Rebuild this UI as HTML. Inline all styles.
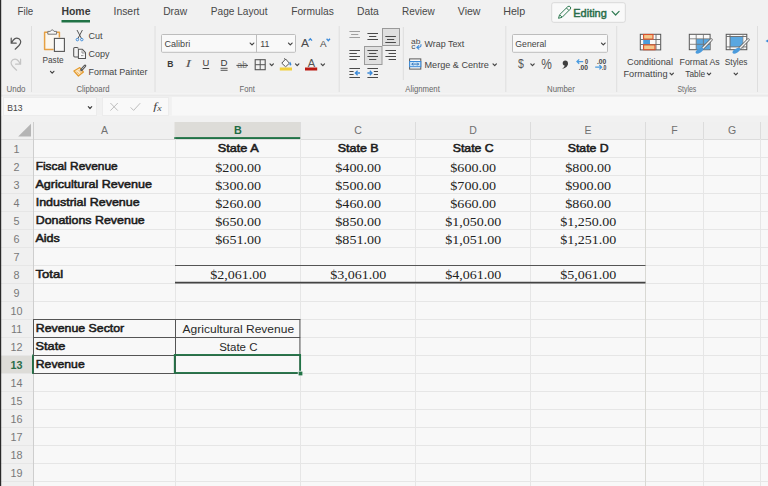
<!DOCTYPE html>
<html lang="en">
<head>
<meta charset="utf-8">
<title>Book - Excel</title>
<style>
html,body{margin:0;padding:0;background:#f8f8f8;overflow:hidden;}
body{width:768px;height:486px;font-family:'Liberation Sans',sans-serif;}
svg{display:block;position:absolute;left:0;top:0;}
text{white-space:pre;}
</style>
</head>
<body>
<svg width="768" height="486" viewBox="0 0 768 486">
<g id="ribbon">
<rect x="0" y="0" width="768" height="97" fill="#f1f1f1"/>
<rect x="0" y="92.8" width="768" height="1.8" fill="#f4f4f4"/>
<rect x="0" y="94.6" width="768" height="2" fill="#eaeaea"/>
<rect x="0" y="96.4" width="768" height="0.8" fill="#f1f1f1"/>
<text x="17.60" y="14.75" font-family="'Liberation Sans', sans-serif" font-size="10.5" font-weight="400" fill="#484848" textLength="15.65" lengthAdjust="spacingAndGlyphs">File</text>
<text x="61.40" y="14.75" font-family="'Liberation Sans', sans-serif" font-size="10.5" font-weight="700" fill="#3a3a3a" textLength="29.10" lengthAdjust="spacingAndGlyphs">Home</text>
<text x="113.50" y="14.75" font-family="'Liberation Sans', sans-serif" font-size="10.5" font-weight="400" fill="#484848" textLength="26.00" lengthAdjust="spacingAndGlyphs">Insert</text>
<text x="163.20" y="14.75" font-family="'Liberation Sans', sans-serif" font-size="10.5" font-weight="400" fill="#484848" textLength="24.00" lengthAdjust="spacingAndGlyphs">Draw</text>
<text x="210.80" y="14.75" font-family="'Liberation Sans', sans-serif" font-size="10.5" font-weight="400" fill="#484848" textLength="56.70" lengthAdjust="spacingAndGlyphs">Page Layout</text>
<text x="291.20" y="14.75" font-family="'Liberation Sans', sans-serif" font-size="10.5" font-weight="400" fill="#484848" textLength="42.60" lengthAdjust="spacingAndGlyphs">Formulas</text>
<text x="357.00" y="14.75" font-family="'Liberation Sans', sans-serif" font-size="10.5" font-weight="400" fill="#484848" textLength="21.80" lengthAdjust="spacingAndGlyphs">Data</text>
<text x="402.00" y="14.75" font-family="'Liberation Sans', sans-serif" font-size="10.5" font-weight="400" fill="#484848" textLength="32.70" lengthAdjust="spacingAndGlyphs">Review</text>
<text x="457.80" y="14.75" font-family="'Liberation Sans', sans-serif" font-size="10.5" font-weight="400" fill="#484848" textLength="22.70" lengthAdjust="spacingAndGlyphs">View</text>
<text x="503.20" y="14.75" font-family="'Liberation Sans', sans-serif" font-size="10.5" font-weight="400" fill="#484848" textLength="22.00" lengthAdjust="spacingAndGlyphs">Help</text>
<rect x="61.5" y="20" width="28.5" height="2.5" fill="#217346"/>
<rect x="551.7" y="2.7" width="73.6" height="19.6" fill="#f9f9f9" stroke="#d9d9d9" stroke-width="1" rx="2"/>
<path d="M558.5,18.3 L559.6,14.7 L567.8,6.6 Q569.2,5.6 570.3,6.9 Q571.3,8.0 570.2,9.2 L562.1,17.3 Z M559.8,14.9 L561.9,17.0 M566.5,8.0 L568.8,10.4" stroke="#2f7a52" fill="none" stroke-width="1.0" stroke-linejoin="round"/>
<text x="573.30" y="16.70" font-family="'Liberation Sans', sans-serif" font-size="10.5" font-weight="400" fill="#2a6e4a" textLength="33.50" lengthAdjust="spacingAndGlyphs" stroke="#2a6e4a" stroke-width="0.45">Editing</text>
<path d="M612.1,11.399999999999999 L615.6,15.0 L619.1,11.399999999999999" stroke="#2f7a52" fill="none" stroke-width="1.2" stroke-linecap="round" stroke-linejoin="round"/>
<line x1="31.5" y1="26" x2="31.5" y2="92" stroke="#dedede" stroke-width="1"/>
<line x1="155" y1="26" x2="155" y2="92" stroke="#dedede" stroke-width="1"/>
<line x1="339.2" y1="26" x2="339.2" y2="92" stroke="#dedede" stroke-width="1"/>
<line x1="505.8" y1="26" x2="505.8" y2="92" stroke="#dedede" stroke-width="1"/>
<line x1="616.7" y1="26" x2="616.7" y2="92" stroke="#dedede" stroke-width="1"/>
<line x1="757.5" y1="26" x2="757.5" y2="92" stroke="#dedede" stroke-width="1"/>
<line x1="403.3" y1="27" x2="403.3" y2="80" stroke="#dedede" stroke-width="1"/>
<path d="M11.2,38.2 L11.2,43.2 L16.2,43.2 M11.6,42.8 Q14.5,36.5 19.0,38.8 Q22.5,41.5 19.0,45.5 L15.2,49.2" stroke="#555" fill="none" stroke-width="1.2" stroke-linecap="round" stroke-linejoin="round"/>
<path d="M20.6,59.2 L20.6,64.2 L15.6,64.2 M20.2,63.8 Q17.3,57.5 12.8,59.8 Q9.3,62.5 12.8,66.5 L16.6,70.2" stroke="#c4c4c4" fill="none" stroke-width="1.2" stroke-linecap="round" stroke-linejoin="round"/>
<text x="6.50" y="91.70" font-family="'Liberation Sans', sans-serif" font-size="8.2" font-weight="400" fill="#666666" textLength="19.00" lengthAdjust="spacingAndGlyphs">Undo</text>
<rect x="44.6" y="32.2" width="14.8" height="17.4" fill="#fbf7f0"/>
<path d="M48,32.2 L44.6,32.2 L44.6,49.6 L53.6,49.6 M56.4,32.2 L59.4,32.2 L59.4,37.6" stroke="#e6a044" fill="none" stroke-width="1.5" stroke-linejoin="round"/>
<path d="M47.8,34.2 L47.8,31.4 L50.4,31.4 Q52.2,28.2 54,31.4 L56.6,31.4 L56.6,34.2 Z" stroke="#777" fill="#f6f6f6" stroke-width="1"/>
<rect x="54.4" y="38.4" width="10" height="13" fill="#f9f9f9" stroke="#555" stroke-width="1.1"/>
<text x="42.50" y="63.00" font-family="'Liberation Sans', sans-serif" font-size="9" font-weight="400" fill="#444444" textLength="21.00" lengthAdjust="spacingAndGlyphs">Paste</text>
<path d="M50.5,71.3 L52.2,73.10000000000001 L53.900000000000006,71.3" stroke="#444" fill="none" stroke-width="1.2" stroke-linecap="round" stroke-linejoin="round"/>
<path d="M77.2,30.4 L81.4,38.4 M82.2,30.4 L78.0,38.4" stroke="#555" fill="none" stroke-width="1.0" stroke-linecap="round"/>
<circle cx="77.4" cy="39.6" r="1.25" fill="none" stroke="#3b8ad9" stroke-width="0.95"/><circle cx="81.8" cy="39.6" r="1.25" fill="none" stroke="#3b8ad9" stroke-width="0.95"/>
<text x="88.50" y="38.75" font-family="'Liberation Sans', sans-serif" font-size="9" font-weight="400" fill="#444444" textLength="14.10" lengthAdjust="spacingAndGlyphs">Cut</text>
<path d="M78.0,56.9 L74.9,56.9 Q73.7,56.9 73.7,55.7 L73.7,48.6 Q73.7,47.4 74.9,47.4 L77.0,47.4 Q78.2,47.4 78.2,48.6" stroke="#555" fill="none" stroke-width="1.05" stroke-linejoin="round"/>
<path d="M78.4,49.3 L82.4,49.3 L85.5,52.6 L85.5,58.4 L78.4,58.4 Z" stroke="#555" fill="#f8f8f8" stroke-width="1.05" stroke-linejoin="round"/>
<path d="M82.0,50.4 L82.0,53.0 L84.6,53.0 M81.0,55.6 L83.4,55.6" stroke="#888" fill="none" stroke-width="0.9"/>
<text x="88.50" y="56.70" font-family="'Liberation Sans', sans-serif" font-size="9" font-weight="400" fill="#444444" textLength="21.00" lengthAdjust="spacingAndGlyphs">Copy</text>
<path d="M79.8,67.6 L73.9,71.0 L78.4,76.0 L83.4,72.0 Z" stroke="#e49b2f" fill="#fbe6c4" stroke-width="1.2" stroke-linejoin="round"/>
<path d="M76.4,71.6 L79.6,74.8 M78.6,70.0 L81.6,73.2" stroke="#ecae55" fill="none" stroke-width="0.9"/>
<path d="M81.4,69.8 L85.0,65.8" stroke="#5a5a5a" fill="none" stroke-width="2.6" stroke-linecap="round"/>
<path d="M82.2,68.9 L84.6,66.3" stroke="#cfcfcf" fill="none" stroke-width="0.8" stroke-linecap="round"/>
<text x="88.50" y="74.70" font-family="'Liberation Sans', sans-serif" font-size="9" font-weight="400" fill="#444444" textLength="59.00" lengthAdjust="spacingAndGlyphs">Format Painter</text>
<text x="76.50" y="91.70" font-family="'Liberation Sans', sans-serif" font-size="8.2" font-weight="400" fill="#666666" textLength="33.00" lengthAdjust="spacingAndGlyphs">Clipboard</text>
<rect x="161.5" y="34.5" width="134" height="17.8" fill="#f9f9f9" stroke="#bdbdbd" stroke-width="1" rx="1"/>
<line x1="256.5" y1="34.5" x2="256.5" y2="52.3" stroke="#bdbdbd" stroke-width="1"/>
<text x="164.50" y="47.00" font-family="'Liberation Sans', sans-serif" font-size="9" font-weight="400" fill="#444444" textLength="25.70" lengthAdjust="spacingAndGlyphs">Calibri</text>
<path d="M250.2,43.05 L252,44.95 L253.8,43.05" stroke="#444" fill="none" stroke-width="1.2" stroke-linecap="round" stroke-linejoin="round"/>
<text x="260.30" y="47.00" font-family="'Liberation Sans', sans-serif" font-size="9" font-weight="400" fill="#444444" textLength="9.20" lengthAdjust="spacingAndGlyphs">11</text>
<path d="M288.5,43.05 L290.3,44.95 L292.1,43.05" stroke="#444" fill="none" stroke-width="1.2" stroke-linecap="round" stroke-linejoin="round"/>
<text x="301.00" y="46.90" font-family="'Liberation Sans', sans-serif" font-size="11.6" font-weight="400" fill="#4a4a4a" textLength="8.00" lengthAdjust="spacingAndGlyphs">A</text>
<path d="M308.6,40.6 L310.3,38.7 L312.0,40.6" stroke="#3b8ad9" fill="none" stroke-width="1.3"/>
<text x="320.00" y="47.00" font-family="'Liberation Sans', sans-serif" font-size="9.9" font-weight="400" fill="#4a4a4a" textLength="6.60" lengthAdjust="spacingAndGlyphs">A</text>
<path d="M326.6,38.8 L328.3,40.7 L330.0,38.8" stroke="#3b8ad9" fill="none" stroke-width="1.3"/>
<text x="167.30" y="66.90" font-family="'Liberation Sans', sans-serif" font-size="9.4" font-weight="700" fill="#3a3a3a" textLength="6.20" lengthAdjust="spacingAndGlyphs">B</text>
<text x="185.50" y="66.90" font-family="'Liberation Serif', serif" font-size="10.2" font-weight="400" font-style="italic" fill="#5a5a5a" textLength="5.60" lengthAdjust="spacingAndGlyphs">I</text>
<text x="202.50" y="66.30" font-family="'Liberation Sans', sans-serif" font-size="9.0" font-weight="400" fill="#3a3a3a" textLength="6.80" lengthAdjust="spacingAndGlyphs">U</text>
<line x1="202.6" y1="68.5" x2="209.2" y2="68.5" stroke="#444" stroke-width="1"/>
<text x="220.50" y="66.30" font-family="'Liberation Sans', sans-serif" font-size="9.0" font-weight="400" fill="#3a3a3a" textLength="7.00" lengthAdjust="spacingAndGlyphs">D</text>
<line x1="220.6" y1="68.3" x2="227.6" y2="68.3" stroke="#444" stroke-width="0.9"/>
<line x1="220.6" y1="70.3" x2="227.6" y2="70.3" stroke="#444" stroke-width="0.9"/>
<text x="237.30" y="67.60" font-family="'Liberation Sans', sans-serif" font-size="8.4" font-weight="400" fill="#7a7a7a" textLength="9.80" lengthAdjust="spacingAndGlyphs">ab</text>
<line x1="236.4" y1="65.4" x2="248.0" y2="65.4" stroke="#4a4a4a" stroke-width="1"/>
<rect x="255.2" y="59.7" width="10" height="10" fill="none" stroke="#555" stroke-width="1.1"/>
<line x1="260.2" y1="59.7" x2="260.2" y2="69.7" stroke="#555" stroke-width="1"/>
<line x1="255.2" y1="64.7" x2="265.2" y2="64.7" stroke="#555" stroke-width="1"/>
<path d="M270.0,63.9 L271.7,65.7 L273.4,63.9" stroke="#444" fill="none" stroke-width="1.2" stroke-linecap="round" stroke-linejoin="round"/>
<path d="M281.8,63.2 L285.6,59.0 L289.4,63.2 L285.6,66.8 Z M284.2,58.4 L285.8,59.6" stroke="#555" fill="#f9f9f9" stroke-width="1" stroke-linejoin="round"/>
<path d="M290.0,61.4 Q292.2,64.4 290.8,65.6 Q289.0,65.8 289.4,63.6 Z" stroke="none" fill="#3b8ad9" stroke-width="1"/>
<rect x="279.8" y="67.5" width="12.2" height="3" fill="#f2d03b"/>
<path d="M295.5,63.9 L297.2,65.7 L298.9,63.9" stroke="#444" fill="none" stroke-width="1.2" stroke-linecap="round" stroke-linejoin="round"/>
<text x="307.80" y="66.60" font-family="'Liberation Sans', sans-serif" font-size="11" font-weight="400" fill="#555" textLength="7.40" lengthAdjust="spacingAndGlyphs">A</text>
<rect x="305.0" y="67.5" width="12.2" height="3" fill="#bb1a12"/>
<path d="M321.1,63.9 L322.8,65.7 L324.5,63.9" stroke="#444" fill="none" stroke-width="1.2" stroke-linecap="round" stroke-linejoin="round"/>
<text x="239.50" y="91.50" font-family="'Liberation Sans', sans-serif" font-size="8.2" font-weight="400" fill="#666666" textLength="15.30" lengthAdjust="spacingAndGlyphs">Font</text>
<line x1="349.4" y1="31.5" x2="360.0" y2="31.5" stroke="#a0a0a0" stroke-width="1"/>
<line x1="351.09999999999997" y1="34.5" x2="358.29999999999995" y2="34.5" stroke="#a0a0a0" stroke-width="1"/>
<line x1="349.4" y1="37.5" x2="360.0" y2="37.5" stroke="#a0a0a0" stroke-width="1"/>
<line x1="367.4" y1="33.5" x2="378.0" y2="33.5" stroke="#4a4a4a" stroke-width="1"/>
<line x1="369.09999999999997" y1="36.5" x2="376.29999999999995" y2="36.5" stroke="#4a4a4a" stroke-width="1"/>
<line x1="367.4" y1="39.5" x2="378.0" y2="39.5" stroke="#4a4a4a" stroke-width="1"/>
<rect x="382.5" y="28.5" width="17" height="17" fill="#e0e0e0" stroke="#9a9a9a" stroke-width="1"/>
<line x1="385.3" y1="36.5" x2="395.90000000000003" y2="36.5" stroke="#4a4a4a" stroke-width="1"/>
<line x1="387.0" y1="39.5" x2="394.2" y2="39.5" stroke="#4a4a4a" stroke-width="1"/>
<line x1="385.3" y1="42.5" x2="395.90000000000003" y2="42.5" stroke="#4a4a4a" stroke-width="1"/>
<line x1="349.4" y1="50.5" x2="360.0" y2="50.5" stroke="#4a4a4a" stroke-width="1"/>
<line x1="349.4" y1="53.5" x2="356.79999999999995" y2="53.5" stroke="#4a4a4a" stroke-width="1"/>
<line x1="349.4" y1="56.5" x2="360.0" y2="56.5" stroke="#4a4a4a" stroke-width="1"/>
<line x1="349.4" y1="59.5" x2="356.79999999999995" y2="59.5" stroke="#4a4a4a" stroke-width="1"/>
<rect x="364.5" y="46.5" width="17.5" height="18" fill="#e0e0e0" stroke="#9a9a9a" stroke-width="1"/>
<line x1="367.4" y1="50.5" x2="378.0" y2="50.5" stroke="#4a4a4a" stroke-width="1"/>
<line x1="369.09999999999997" y1="53.5" x2="376.29999999999995" y2="53.5" stroke="#4a4a4a" stroke-width="1"/>
<line x1="367.4" y1="56.5" x2="378.0" y2="56.5" stroke="#4a4a4a" stroke-width="1"/>
<line x1="369.09999999999997" y1="59.5" x2="376.29999999999995" y2="59.5" stroke="#4a4a4a" stroke-width="1"/>
<line x1="385.4" y1="50.5" x2="396.0" y2="50.5" stroke="#4a4a4a" stroke-width="1"/>
<line x1="388.6" y1="53.5" x2="396.0" y2="53.5" stroke="#4a4a4a" stroke-width="1"/>
<line x1="385.4" y1="56.5" x2="396.0" y2="56.5" stroke="#4a4a4a" stroke-width="1"/>
<line x1="388.6" y1="59.5" x2="396.0" y2="59.5" stroke="#4a4a4a" stroke-width="1"/>
<line x1="349.4" y1="68.5" x2="360.0" y2="68.5" stroke="#4a4a4a" stroke-width="1"/>
<line x1="349.4" y1="77.5" x2="360.0" y2="77.5" stroke="#4a4a4a" stroke-width="1"/>
<line x1="349.4" y1="71.5" x2="353.59999999999997" y2="71.5" stroke="#4a4a4a" stroke-width="1"/>
<line x1="349.4" y1="74.5" x2="353.59999999999997" y2="74.5" stroke="#4a4a4a" stroke-width="1"/>
<path d="M360.0,73 L355.59999999999997,73 M357.59999999999997,70.8 L355.4,73 L357.59999999999997,75.2" stroke="#3b8ad9" fill="none" stroke-width="1.3"/>
<line x1="367.4" y1="68.5" x2="378.0" y2="68.5" stroke="#4a4a4a" stroke-width="1"/>
<line x1="367.4" y1="77.5" x2="378.0" y2="77.5" stroke="#4a4a4a" stroke-width="1"/>
<line x1="373.79999999999995" y1="71.5" x2="378.0" y2="71.5" stroke="#4a4a4a" stroke-width="1"/>
<line x1="373.79999999999995" y1="74.5" x2="378.0" y2="74.5" stroke="#4a4a4a" stroke-width="1"/>
<path d="M367.4,73 L371.79999999999995,73 M369.79999999999995,70.8 L372.0,73 L369.79999999999995,75.2" stroke="#3b8ad9" fill="none" stroke-width="1.3"/>
<text x="411.10" y="43.80" font-family="'Liberation Sans', sans-serif" font-size="8" font-weight="400" fill="#4a4a4a" textLength="9.40" lengthAdjust="spacingAndGlyphs">ab</text>
<text x="411.30" y="48.80" font-family="'Liberation Sans', sans-serif" font-size="8" font-weight="400" fill="#4a4a4a" textLength="4.20" lengthAdjust="spacingAndGlyphs">c</text>
<path d="M421.0,44.6 Q421.4,47.8 417.0,47.4 M418.8,45.6 L416.8,47.4 L418.8,49.2" stroke="#3b8ad9" fill="none" stroke-width="1.1" stroke-linecap="round" stroke-linejoin="round"/>
<text x="424.50" y="47.00" font-family="'Liberation Sans', sans-serif" font-size="9" font-weight="400" fill="#444444" textLength="39.80" lengthAdjust="spacingAndGlyphs">Wrap Text</text>
<rect x="409.6" y="58.9" width="11.2" height="10.2" fill="#f9f9f9" stroke="#5a5a5a" stroke-width="1"/>
<rect x="409.6" y="61.5" width="11.2" height="5.2" fill="#cfe6f8" stroke="#3b8ad9" stroke-width="1"/>
<path d="M411.8,64.1 L418.6,64.1 M413.2,62.7 L411.8,64.1 L413.2,65.5 M417.2,62.7 L418.6,64.1 L417.2,65.5" stroke="#2b6fb8" fill="none" stroke-width="0.9"/>
<text x="424.50" y="68.30" font-family="'Liberation Sans', sans-serif" font-size="9" font-weight="400" fill="#444444" textLength="64.30" lengthAdjust="spacingAndGlyphs">Merge &amp; Centre</text>
<path d="M493.0,63.9 L494.7,65.7 L496.4,63.9" stroke="#444" fill="none" stroke-width="1.2" stroke-linecap="round" stroke-linejoin="round"/>
<text x="405.30" y="91.50" font-family="'Liberation Sans', sans-serif" font-size="8.2" font-weight="400" fill="#666666" textLength="34.50" lengthAdjust="spacingAndGlyphs">Alignment</text>
<rect x="512.5" y="34.5" width="95" height="17.8" fill="#f9f9f9" stroke="#bdbdbd" stroke-width="1" rx="1"/>
<text x="515.30" y="47.00" font-family="'Liberation Sans', sans-serif" font-size="9" font-weight="400" fill="#444444" textLength="31.00" lengthAdjust="spacingAndGlyphs">General</text>
<path d="M601.5,43.05 L603.3,44.95 L605.0999999999999,43.05" stroke="#444" fill="none" stroke-width="1.2" stroke-linecap="round" stroke-linejoin="round"/>
<text x="517.90" y="68.20" font-family="'Liberation Sans', sans-serif" font-size="12.6" font-weight="400" fill="#555" textLength="5.90" lengthAdjust="spacingAndGlyphs">$</text>
<path d="M530.8,63.9 L532.5,65.7 L534.2,63.9" stroke="#444" fill="none" stroke-width="1.2" stroke-linecap="round" stroke-linejoin="round"/>
<text x="541.20" y="69.20" font-family="'Liberation Sans', sans-serif" font-size="14.2" font-weight="400" fill="#555" textLength="10.60" lengthAdjust="spacingAndGlyphs">%</text>
<circle cx="565.3" cy="63.0" r="2.6" fill="#3f3f3f"/>
<path d="M567.9,62.8 Q568.4,67.6 562.0,68.9 Q565.4,66.6 564.6,64.6 Z" stroke="none" fill="#3f3f3f" stroke-width="1"/>
<path d="M577.0,61.6 L583.2,61.6 M579.2,59.4 L577.0,61.6 L579.2,63.8" stroke="#4a9be0" fill="none" stroke-width="1.3"/>
<text x="584.90" y="63.90" font-family="'Liberation Sans', sans-serif" font-size="7.8" font-weight="700" fill="#444" textLength="3.10" lengthAdjust="spacingAndGlyphs">0</text>
<text x="578.70" y="70.10" font-family="'Liberation Sans', sans-serif" font-size="7.8" font-weight="700" fill="#444" textLength="9.30" lengthAdjust="spacingAndGlyphs">.00</text>
<text x="597.00" y="63.90" font-family="'Liberation Sans', sans-serif" font-size="7.8" font-weight="700" fill="#444" textLength="9.30" lengthAdjust="spacingAndGlyphs">.00</text>
<path d="M595.2,67.2 L601.6,67.2 M599.4,65.0 L601.6,67.2 L599.4,69.4" stroke="#4a9be0" fill="none" stroke-width="1.3"/>
<text x="602.00" y="70.10" font-family="'Liberation Sans', sans-serif" font-size="7.8" font-weight="700" fill="#444" textLength="4.30" lengthAdjust="spacingAndGlyphs">.0</text>
<text x="547.00" y="91.50" font-family="'Liberation Sans', sans-serif" font-size="8.2" font-weight="400" fill="#666666" textLength="27.80" lengthAdjust="spacingAndGlyphs">Number</text>
<rect x="640.3" y="34.3" width="20.4" height="15.6" fill="#f9f9f9" stroke="#555" stroke-width="1"/>
<line x1="656.0" y1="34.3" x2="656.0" y2="49.9" stroke="#666" stroke-width="0.9"/>
<line x1="640.3" y1="39.5" x2="660.7" y2="39.5" stroke="#666" stroke-width="0.9"/>
<line x1="640.3" y1="44.5" x2="660.7" y2="44.5" stroke="#666" stroke-width="0.9"/>
<rect x="643.6" y="34.5" width="9.4" height="4.6" fill="#f3c88c" stroke="#d9512c" stroke-width="1.1"/>
<rect x="643.2" y="40.0" width="6.8" height="4.0" fill="#4a9ddc"/>
<rect x="643.6" y="44.9" width="11.4" height="4.8" fill="#f3c88c" stroke="#d9512c" stroke-width="1.1"/>
<text x="627.00" y="65.30" font-family="'Liberation Sans', sans-serif" font-size="9" font-weight="400" fill="#444444" textLength="46.00" lengthAdjust="spacingAndGlyphs">Conditional</text>
<text x="623.50" y="77.00" font-family="'Liberation Sans', sans-serif" font-size="9" font-weight="400" fill="#444444" textLength="44.00" lengthAdjust="spacingAndGlyphs">Formatting</text>
<path d="M670.0,73.1 L671.7,74.9 L673.4000000000001,73.1" stroke="#444" fill="none" stroke-width="1.2" stroke-linecap="round" stroke-linejoin="round"/>
<rect x="689.3" y="34.3" width="20.8" height="15.4" fill="#f9f9f9" stroke="#555" stroke-width="1"/>
<rect x="696.2" y="39.0" width="13.6" height="10.4" fill="#5aa7e0"/>
<line x1="696.2" y1="34.3" x2="696.2" y2="49.7" stroke="#707070" stroke-width="0.8"/>
<line x1="703.4" y1="34.3" x2="703.4" y2="49.7" stroke="#707070" stroke-width="0.8"/>
<line x1="689.3" y1="38.8" x2="710.1" y2="38.8" stroke="#707070" stroke-width="0.8"/>
<line x1="689.3" y1="44.3" x2="710.1" y2="44.3" stroke="#707070" stroke-width="0.8"/>
<path d="M711.2,39.8 L702.8,48.2" stroke="#666" fill="none" stroke-width="3.0" stroke-linecap="round"/>
<path d="M711.2,39.8 L702.8,48.2" stroke="#f4f4f4" fill="none" stroke-width="1.4" stroke-linecap="round"/>
<ellipse cx="699.50" cy="50.70" rx="4.4" ry="2.0" transform="rotate(-32 699.50 50.70)" fill="#4b9bdc"/>
<text x="679.50" y="65.30" font-family="'Liberation Sans', sans-serif" font-size="9" font-weight="400" fill="#444444" textLength="40.20" lengthAdjust="spacingAndGlyphs">Format As</text>
<text x="685.30" y="77.00" font-family="'Liberation Sans', sans-serif" font-size="9" font-weight="400" fill="#444444" textLength="19.90" lengthAdjust="spacingAndGlyphs">Table</text>
<path d="M707.3,73.1 L709,74.9 L710.7,73.1" stroke="#444" fill="none" stroke-width="1.2" stroke-linecap="round" stroke-linejoin="round"/>
<rect x="726.2" y="34.3" width="20.6" height="15.4" fill="#f9f9f9" stroke="#555" stroke-width="1"/>
<rect x="730.0" y="36.6" width="13.0" height="10.2" fill="#5aa7e0"/>
<line x1="730.0" y1="34.3" x2="730.0" y2="49.7" stroke="#666" stroke-width="0.9"/>
<line x1="743.0" y1="34.3" x2="743.0" y2="49.7" stroke="#888" stroke-width="0.7"/>
<line x1="726.2" y1="36.5" x2="746.8" y2="36.5" stroke="#666" stroke-width="0.9"/>
<line x1="726.2" y1="46.9" x2="746.8" y2="46.9" stroke="#666" stroke-width="0.9"/>
<path d="M748.2,39.8 L739.8,48.2" stroke="#666" fill="none" stroke-width="3.0" stroke-linecap="round"/>
<path d="M748.2,39.8 L739.8,48.2" stroke="#f4f4f4" fill="none" stroke-width="1.4" stroke-linecap="round"/>
<ellipse cx="736.40" cy="50.70" rx="4.4" ry="2.0" transform="rotate(-32 736.40 50.70)" fill="#4b9bdc"/>
<text x="724.80" y="65.30" font-family="'Liberation Sans', sans-serif" font-size="9" font-weight="400" fill="#444444" textLength="22.70" lengthAdjust="spacingAndGlyphs">Styles</text>
<path d="M734.0999999999999,73.1 L735.8,74.9 L737.5,73.1" stroke="#444" fill="none" stroke-width="1.2" stroke-linecap="round" stroke-linejoin="round"/>
<text x="677.50" y="91.70" font-family="'Liberation Sans', sans-serif" font-size="8.2" font-weight="400" fill="#666666" textLength="18.80" lengthAdjust="spacingAndGlyphs">Styles</text>
<path d="M765.5,41 L768,39.5 L768,42.5 Z" stroke="none" fill="#3b8ad9" stroke-width="1"/>
</g>
<g id="formulabar">
<rect x="0" y="97" width="768" height="18.5" fill="#f8f8f8"/>
<rect x="0" y="115.5" width="768" height="7" fill="#f1f1f1"/>
<rect x="3.5" y="97.5" width="93" height="18" fill="#f9f9f9" stroke="#ececec" stroke-width="1"/>
<text x="7.20" y="110.50" font-family="'Liberation Sans', sans-serif" font-size="9" font-weight="400" fill="#444444" textLength="15.30" lengthAdjust="spacingAndGlyphs">B13</text>
<path d="M88.3,106.69999999999999 L90,108.5 L91.7,106.69999999999999" stroke="#444" fill="none" stroke-width="1.2" stroke-linecap="round" stroke-linejoin="round"/>
<rect x="96.8" y="97" width="5.6" height="18.5" fill="#f1f1f1"/>
<rect x="102.5" y="97.5" width="66" height="18" fill="#f9f9f9" stroke="#ececec" stroke-width="1"/>
<path d="M110.4,103 L117.8,110.6 M117.8,103 L110.4,110.6" stroke="#bdbdbd" fill="none" stroke-width="1"/>
<path d="M130.6,107.4 L133.6,110.4 L140.2,103.2" stroke="#bdbdbd" fill="none" stroke-width="1"/>
<text x="153.20" y="110.20" font-family="'Liberation Serif', serif" font-size="10.2" font-weight="400" font-style="italic" fill="#444" textLength="3.80" lengthAdjust="spacingAndGlyphs">f</text>
<text x="157.20" y="110.90" font-family="'Liberation Serif', serif" font-size="8" font-weight="400" font-style="italic" fill="#444" textLength="4.40" lengthAdjust="spacingAndGlyphs">x</text>
<rect x="168.8" y="97" width="3" height="18.5" fill="#f1f1f1"/>
</g>
<g id="grid">
<rect x="0" y="122" width="768" height="364" fill="#f8f8f8"/>
<rect x="0" y="122" width="768" height="17.5" fill="#f0f0f0"/>
<rect x="0" y="122" width="33" height="364" fill="#f0f0f0"/>
<rect x="175" y="122" width="125.5" height="16" fill="#dddcd8"/>
<rect x="175" y="137" width="125.5" height="2" fill="#217346"/>
<rect x="0" y="355.5" width="33" height="17.5" fill="#dddcd8"/>
<rect x="31.5" y="355" width="2" height="18.5" fill="#217346"/>
<line x1="0" y1="139.5" x2="768" y2="139.5" stroke="#dcdcdc" stroke-width="1"/>
<line x1="0" y1="157.5" x2="768" y2="157.5" stroke="#e6e6e6" stroke-width="1"/>
<line x1="0" y1="175.5" x2="768" y2="175.5" stroke="#e6e6e6" stroke-width="1"/>
<line x1="0" y1="193.5" x2="768" y2="193.5" stroke="#e6e6e6" stroke-width="1"/>
<line x1="0" y1="211.5" x2="768" y2="211.5" stroke="#e6e6e6" stroke-width="1"/>
<line x1="0" y1="229.5" x2="768" y2="229.5" stroke="#e6e6e6" stroke-width="1"/>
<line x1="0" y1="247.5" x2="768" y2="247.5" stroke="#e6e6e6" stroke-width="1"/>
<line x1="0" y1="265.5" x2="768" y2="265.5" stroke="#e6e6e6" stroke-width="1"/>
<line x1="0" y1="283.5" x2="768" y2="283.5" stroke="#e6e6e6" stroke-width="1"/>
<line x1="0" y1="301.5" x2="768" y2="301.5" stroke="#e6e6e6" stroke-width="1"/>
<line x1="0" y1="319.5" x2="768" y2="319.5" stroke="#e6e6e6" stroke-width="1"/>
<line x1="0" y1="337.5" x2="768" y2="337.5" stroke="#e6e6e6" stroke-width="1"/>
<line x1="0" y1="355.5" x2="768" y2="355.5" stroke="#e6e6e6" stroke-width="1"/>
<line x1="0" y1="373.5" x2="768" y2="373.5" stroke="#e6e6e6" stroke-width="1"/>
<line x1="0" y1="391.5" x2="768" y2="391.5" stroke="#e6e6e6" stroke-width="1"/>
<line x1="0" y1="409.5" x2="768" y2="409.5" stroke="#e6e6e6" stroke-width="1"/>
<line x1="0" y1="427.5" x2="768" y2="427.5" stroke="#e6e6e6" stroke-width="1"/>
<line x1="0" y1="445.5" x2="768" y2="445.5" stroke="#e6e6e6" stroke-width="1"/>
<line x1="0" y1="463.5" x2="768" y2="463.5" stroke="#e6e6e6" stroke-width="1"/>
<line x1="0" y1="481.5" x2="768" y2="481.5" stroke="#e6e6e6" stroke-width="1"/>
<line x1="33.5" y1="122" x2="33.5" y2="486" stroke="#cecece" stroke-width="1"/>
<line x1="175.5" y1="122" x2="175.5" y2="486" stroke="#e6e6e6" stroke-width="1"/>
<line x1="300.5" y1="122" x2="300.5" y2="486" stroke="#e6e6e6" stroke-width="1"/>
<line x1="415.5" y1="122" x2="415.5" y2="486" stroke="#e6e6e6" stroke-width="1"/>
<line x1="530.5" y1="122" x2="530.5" y2="486" stroke="#e6e6e6" stroke-width="1"/>
<line x1="645.5" y1="122" x2="645.5" y2="486" stroke="#e6e6e6" stroke-width="1"/>
<line x1="703.5" y1="122" x2="703.5" y2="486" stroke="#e6e6e6" stroke-width="1"/>
<line x1="760.5" y1="122" x2="760.5" y2="486" stroke="#e6e6e6" stroke-width="1"/>
<line x1="175.5" y1="122" x2="175.5" y2="139" stroke="#dcdcdc" stroke-width="1"/>
<line x1="300.5" y1="122" x2="300.5" y2="139" stroke="#dcdcdc" stroke-width="1"/>
<line x1="415.5" y1="122" x2="415.5" y2="139" stroke="#dcdcdc" stroke-width="1"/>
<line x1="530.5" y1="122" x2="530.5" y2="139" stroke="#dcdcdc" stroke-width="1"/>
<line x1="645.5" y1="122" x2="645.5" y2="139" stroke="#dcdcdc" stroke-width="1"/>
<line x1="703.5" y1="122" x2="703.5" y2="139" stroke="#dcdcdc" stroke-width="1"/>
<line x1="760.5" y1="122" x2="760.5" y2="139" stroke="#dcdcdc" stroke-width="1"/>
<line x1="645.5" y1="139" x2="645.5" y2="486" stroke="#d9d9d4" stroke-width="1"/>
<rect x="174.5" y="122" width="125.5" height="15.5" fill="#dddcd8"/>
<rect x="174.2" y="137.2" width="126" height="1.7" fill="#217346"/>
<rect x="0" y="356" width="32" height="17" fill="#dddcd8"/>
<rect x="32.2" y="355.5" width="1.4" height="18" fill="#217346"/>
<path d="M18.2,136.4 L31,136.4 L31,123.8 Z" stroke="none" fill="#b5b5b5" stroke-width="1"/>
<text x="104.50" y="134.20" text-anchor="middle" font-family="'Liberation Sans', sans-serif" font-size="10.5" font-weight="400" fill="#707070">A</text>
<text x="238.00" y="134.20" text-anchor="middle" font-family="'Liberation Sans', sans-serif" font-size="10.8" font-weight="700" fill="#1f6b43">B</text>
<text x="358.00" y="134.20" text-anchor="middle" font-family="'Liberation Sans', sans-serif" font-size="10.5" font-weight="400" fill="#707070">C</text>
<text x="473.00" y="134.20" text-anchor="middle" font-family="'Liberation Sans', sans-serif" font-size="10.5" font-weight="400" fill="#707070">D</text>
<text x="588.00" y="134.20" text-anchor="middle" font-family="'Liberation Sans', sans-serif" font-size="10.5" font-weight="400" fill="#707070">E</text>
<text x="674.50" y="134.20" text-anchor="middle" font-family="'Liberation Sans', sans-serif" font-size="10.5" font-weight="400" fill="#707070">F</text>
<text x="732.00" y="134.20" text-anchor="middle" font-family="'Liberation Sans', sans-serif" font-size="10.5" font-weight="400" fill="#707070">G</text>
<text x="16.60" y="152.75" text-anchor="middle" font-family="'Liberation Sans', sans-serif" font-size="10.8" font-weight="400" fill="#787878">1</text>
<text x="16.60" y="170.75" text-anchor="middle" font-family="'Liberation Sans', sans-serif" font-size="10.8" font-weight="400" fill="#787878">2</text>
<text x="16.60" y="188.75" text-anchor="middle" font-family="'Liberation Sans', sans-serif" font-size="10.8" font-weight="400" fill="#787878">3</text>
<text x="16.60" y="206.75" text-anchor="middle" font-family="'Liberation Sans', sans-serif" font-size="10.8" font-weight="400" fill="#787878">4</text>
<text x="16.60" y="224.75" text-anchor="middle" font-family="'Liberation Sans', sans-serif" font-size="10.8" font-weight="400" fill="#787878">5</text>
<text x="16.60" y="242.75" text-anchor="middle" font-family="'Liberation Sans', sans-serif" font-size="10.8" font-weight="400" fill="#787878">6</text>
<text x="16.60" y="260.75" text-anchor="middle" font-family="'Liberation Sans', sans-serif" font-size="10.8" font-weight="400" fill="#787878">7</text>
<text x="16.60" y="278.75" text-anchor="middle" font-family="'Liberation Sans', sans-serif" font-size="10.8" font-weight="400" fill="#787878">8</text>
<text x="16.60" y="296.75" text-anchor="middle" font-family="'Liberation Sans', sans-serif" font-size="10.8" font-weight="400" fill="#787878">9</text>
<text x="16.60" y="314.75" text-anchor="middle" font-family="'Liberation Sans', sans-serif" font-size="10.8" font-weight="400" fill="#787878">10</text>
<text x="16.60" y="332.75" text-anchor="middle" font-family="'Liberation Sans', sans-serif" font-size="10.8" font-weight="400" fill="#787878">11</text>
<text x="16.60" y="350.75" text-anchor="middle" font-family="'Liberation Sans', sans-serif" font-size="10.8" font-weight="400" fill="#787878">12</text>
<text x="16.60" y="368.75" text-anchor="middle" font-family="'Liberation Sans', sans-serif" font-size="10.8" font-weight="700" fill="#2a6e4a">13</text>
<text x="16.60" y="386.75" text-anchor="middle" font-family="'Liberation Sans', sans-serif" font-size="10.8" font-weight="400" fill="#787878">14</text>
<text x="16.60" y="404.75" text-anchor="middle" font-family="'Liberation Sans', sans-serif" font-size="10.8" font-weight="400" fill="#787878">15</text>
<text x="16.60" y="422.75" text-anchor="middle" font-family="'Liberation Sans', sans-serif" font-size="10.8" font-weight="400" fill="#787878">16</text>
<text x="16.60" y="440.75" text-anchor="middle" font-family="'Liberation Sans', sans-serif" font-size="10.8" font-weight="400" fill="#787878">17</text>
<text x="16.60" y="458.75" text-anchor="middle" font-family="'Liberation Sans', sans-serif" font-size="10.8" font-weight="400" fill="#787878">18</text>
<text x="16.60" y="476.75" text-anchor="middle" font-family="'Liberation Sans', sans-serif" font-size="10.8" font-weight="400" fill="#787878">19</text>
<text x="16.60" y="494.75" text-anchor="middle" font-family="'Liberation Sans', sans-serif" font-size="10.8" font-weight="400" fill="#787878">20</text>
<text x="35.70" y="170.30" font-family="'Liberation Sans', sans-serif" font-size="11.5" font-weight="400" fill="#1c1c1c" textLength="82.00" lengthAdjust="spacingAndGlyphs" stroke="#1c1c1c" stroke-width="0.55">Fiscal Revenue</text>
<text x="35.40" y="188.30" font-family="'Liberation Sans', sans-serif" font-size="11.5" font-weight="400" fill="#1c1c1c" textLength="116.70" lengthAdjust="spacingAndGlyphs" stroke="#1c1c1c" stroke-width="0.55">Agricultural Revenue</text>
<text x="35.70" y="206.30" font-family="'Liberation Sans', sans-serif" font-size="11.5" font-weight="400" fill="#1c1c1c" textLength="104.00" lengthAdjust="spacingAndGlyphs" stroke="#1c1c1c" stroke-width="0.55">Industrial Revenue</text>
<text x="35.70" y="224.30" font-family="'Liberation Sans', sans-serif" font-size="11.5" font-weight="400" fill="#1c1c1c" textLength="109.00" lengthAdjust="spacingAndGlyphs" stroke="#1c1c1c" stroke-width="0.55">Donations Revenue</text>
<text x="35.40" y="242.30" font-family="'Liberation Sans', sans-serif" font-size="11.5" font-weight="400" fill="#1c1c1c" textLength="24.50" lengthAdjust="spacingAndGlyphs" stroke="#1c1c1c" stroke-width="0.55">Aids</text>
<text x="35.50" y="278.30" font-family="'Liberation Sans', sans-serif" font-size="11.5" font-weight="400" fill="#1c1c1c" textLength="27.60" lengthAdjust="spacingAndGlyphs" stroke="#1c1c1c" stroke-width="0.55">Total</text>
<text x="35.80" y="332.30" font-family="'Liberation Sans', sans-serif" font-size="11.5" font-weight="400" fill="#1c1c1c" textLength="88.40" lengthAdjust="spacingAndGlyphs" stroke="#1c1c1c" stroke-width="0.55">Revenue Sector</text>
<text x="35.50" y="350.30" font-family="'Liberation Sans', sans-serif" font-size="11.5" font-weight="400" fill="#1c1c1c" textLength="29.80" lengthAdjust="spacingAndGlyphs" stroke="#1c1c1c" stroke-width="0.55">State</text>
<text x="35.80" y="368.30" font-family="'Liberation Sans', sans-serif" font-size="11.5" font-weight="400" fill="#1c1c1c" textLength="48.90" lengthAdjust="spacingAndGlyphs" stroke="#1c1c1c" stroke-width="0.55">Revenue</text>
<text x="217.70" y="152.30" font-family="'Liberation Sans', sans-serif" font-size="11.5" font-weight="400" fill="#1c1c1c" textLength="41.00" lengthAdjust="spacingAndGlyphs" stroke="#1c1c1c" stroke-width="0.55">State A</text>
<text x="337.70" y="152.30" font-family="'Liberation Sans', sans-serif" font-size="11.5" font-weight="400" fill="#1c1c1c" textLength="41.00" lengthAdjust="spacingAndGlyphs" stroke="#1c1c1c" stroke-width="0.55">State B</text>
<text x="452.70" y="152.30" font-family="'Liberation Sans', sans-serif" font-size="11.5" font-weight="400" fill="#1c1c1c" textLength="41.00" lengthAdjust="spacingAndGlyphs" stroke="#1c1c1c" stroke-width="0.55">State C</text>
<text x="567.70" y="152.30" font-family="'Liberation Sans', sans-serif" font-size="11.5" font-weight="400" fill="#1c1c1c" textLength="41.00" lengthAdjust="spacingAndGlyphs" stroke="#1c1c1c" stroke-width="0.55">State D</text>
<text x="215.30" y="171.70" font-family="'Liberation Serif', serif" font-size="13" font-weight="400" fill="#222" textLength="45.80" lengthAdjust="spacingAndGlyphs">$200.00</text>
<text x="335.30" y="171.70" font-family="'Liberation Serif', serif" font-size="13" font-weight="400" fill="#222" textLength="45.80" lengthAdjust="spacingAndGlyphs">$400.00</text>
<text x="450.30" y="171.70" font-family="'Liberation Serif', serif" font-size="13" font-weight="400" fill="#222" textLength="45.80" lengthAdjust="spacingAndGlyphs">$600.00</text>
<text x="565.30" y="171.70" font-family="'Liberation Serif', serif" font-size="13" font-weight="400" fill="#222" textLength="45.80" lengthAdjust="spacingAndGlyphs">$800.00</text>
<text x="215.30" y="189.70" font-family="'Liberation Serif', serif" font-size="13" font-weight="400" fill="#222" textLength="45.80" lengthAdjust="spacingAndGlyphs">$300.00</text>
<text x="335.30" y="189.70" font-family="'Liberation Serif', serif" font-size="13" font-weight="400" fill="#222" textLength="45.80" lengthAdjust="spacingAndGlyphs">$500.00</text>
<text x="450.30" y="189.70" font-family="'Liberation Serif', serif" font-size="13" font-weight="400" fill="#222" textLength="45.80" lengthAdjust="spacingAndGlyphs">$700.00</text>
<text x="565.30" y="189.70" font-family="'Liberation Serif', serif" font-size="13" font-weight="400" fill="#222" textLength="45.80" lengthAdjust="spacingAndGlyphs">$900.00</text>
<text x="215.30" y="207.70" font-family="'Liberation Serif', serif" font-size="13" font-weight="400" fill="#222" textLength="45.80" lengthAdjust="spacingAndGlyphs">$260.00</text>
<text x="335.30" y="207.70" font-family="'Liberation Serif', serif" font-size="13" font-weight="400" fill="#222" textLength="45.80" lengthAdjust="spacingAndGlyphs">$460.00</text>
<text x="450.30" y="207.70" font-family="'Liberation Serif', serif" font-size="13" font-weight="400" fill="#222" textLength="45.80" lengthAdjust="spacingAndGlyphs">$660.00</text>
<text x="565.30" y="207.70" font-family="'Liberation Serif', serif" font-size="13" font-weight="400" fill="#222" textLength="45.80" lengthAdjust="spacingAndGlyphs">$860.00</text>
<text x="215.30" y="225.70" font-family="'Liberation Serif', serif" font-size="13" font-weight="400" fill="#222" textLength="45.80" lengthAdjust="spacingAndGlyphs">$650.00</text>
<text x="335.30" y="225.70" font-family="'Liberation Serif', serif" font-size="13" font-weight="400" fill="#222" textLength="45.80" lengthAdjust="spacingAndGlyphs">$850.00</text>
<text x="445.20" y="225.70" font-family="'Liberation Serif', serif" font-size="13" font-weight="400" fill="#222" textLength="56.00" lengthAdjust="spacingAndGlyphs">$1,050.00</text>
<text x="560.20" y="225.70" font-family="'Liberation Serif', serif" font-size="13" font-weight="400" fill="#222" textLength="56.00" lengthAdjust="spacingAndGlyphs">$1,250.00</text>
<text x="215.30" y="243.70" font-family="'Liberation Serif', serif" font-size="13" font-weight="400" fill="#222" textLength="45.80" lengthAdjust="spacingAndGlyphs">$651.00</text>
<text x="335.30" y="243.70" font-family="'Liberation Serif', serif" font-size="13" font-weight="400" fill="#222" textLength="45.80" lengthAdjust="spacingAndGlyphs">$851.00</text>
<text x="445.20" y="243.70" font-family="'Liberation Serif', serif" font-size="13" font-weight="400" fill="#222" textLength="56.00" lengthAdjust="spacingAndGlyphs">$1,051.00</text>
<text x="560.20" y="243.70" font-family="'Liberation Serif', serif" font-size="13" font-weight="400" fill="#222" textLength="56.00" lengthAdjust="spacingAndGlyphs">$1,251.00</text>
<text x="210.20" y="278.80" font-family="'Liberation Serif', serif" font-size="13" font-weight="400" fill="#222" textLength="56.00" lengthAdjust="spacingAndGlyphs">$2,061.00</text>
<text x="330.20" y="278.80" font-family="'Liberation Serif', serif" font-size="13" font-weight="400" fill="#222" textLength="56.00" lengthAdjust="spacingAndGlyphs">$3,061.00</text>
<text x="445.20" y="278.80" font-family="'Liberation Serif', serif" font-size="13" font-weight="400" fill="#222" textLength="56.00" lengthAdjust="spacingAndGlyphs">$4,061.00</text>
<text x="560.20" y="278.80" font-family="'Liberation Serif', serif" font-size="13" font-weight="400" fill="#222" textLength="56.00" lengthAdjust="spacingAndGlyphs">$5,061.00</text>
<text x="182.60" y="332.70" font-family="'Liberation Sans', sans-serif" font-size="11.7" font-weight="400" fill="#2a2a2a" textLength="111.50" lengthAdjust="spacingAndGlyphs">Agricultural Revenue</text>
<text x="219.20" y="350.70" font-family="'Liberation Sans', sans-serif" font-size="11.7" font-weight="400" fill="#2a2a2a" textLength="38.30" lengthAdjust="spacingAndGlyphs">State C</text>
<line x1="175" y1="265.5" x2="645.5" y2="265.5" stroke="#555" stroke-width="1"/>
<line x1="175" y1="282.6" x2="645.5" y2="282.6" stroke="#444" stroke-width="1.8"/>
<line x1="33" y1="319.5" x2="300.3" y2="319.5" stroke="#555" stroke-width="1"/>
<line x1="33" y1="337.5" x2="300.3" y2="337.5" stroke="#555" stroke-width="1"/>
<line x1="33" y1="355.5" x2="300.3" y2="355.5" stroke="#555" stroke-width="1"/>
<line x1="33" y1="373.5" x2="300.3" y2="373.5" stroke="#555" stroke-width="1"/>
<line x1="33.5" y1="319" x2="33.5" y2="374" stroke="#555" stroke-width="1"/>
<line x1="175.5" y1="319" x2="175.5" y2="374" stroke="#555" stroke-width="1"/>
<line x1="299.9" y1="319" x2="299.9" y2="374" stroke="#555" stroke-width="1"/>
<rect x="174.7" y="354.9" width="125.5" height="18.0" fill="none" stroke="#217346" stroke-width="1.7"/>
<rect x="297.8" y="370.8" width="5" height="5" fill="#f8f8f8"/>
<rect x="298.6" y="371.6" width="3.8" height="3.8" fill="#217346"/>
<rect x="32.2" y="354.5" width="1.4" height="19.5" fill="#217346"/>
</g>
<rect x="0" y="0" width="1.2" height="486" fill="#2a2a2a"/>
</svg>
</body>
</html>
